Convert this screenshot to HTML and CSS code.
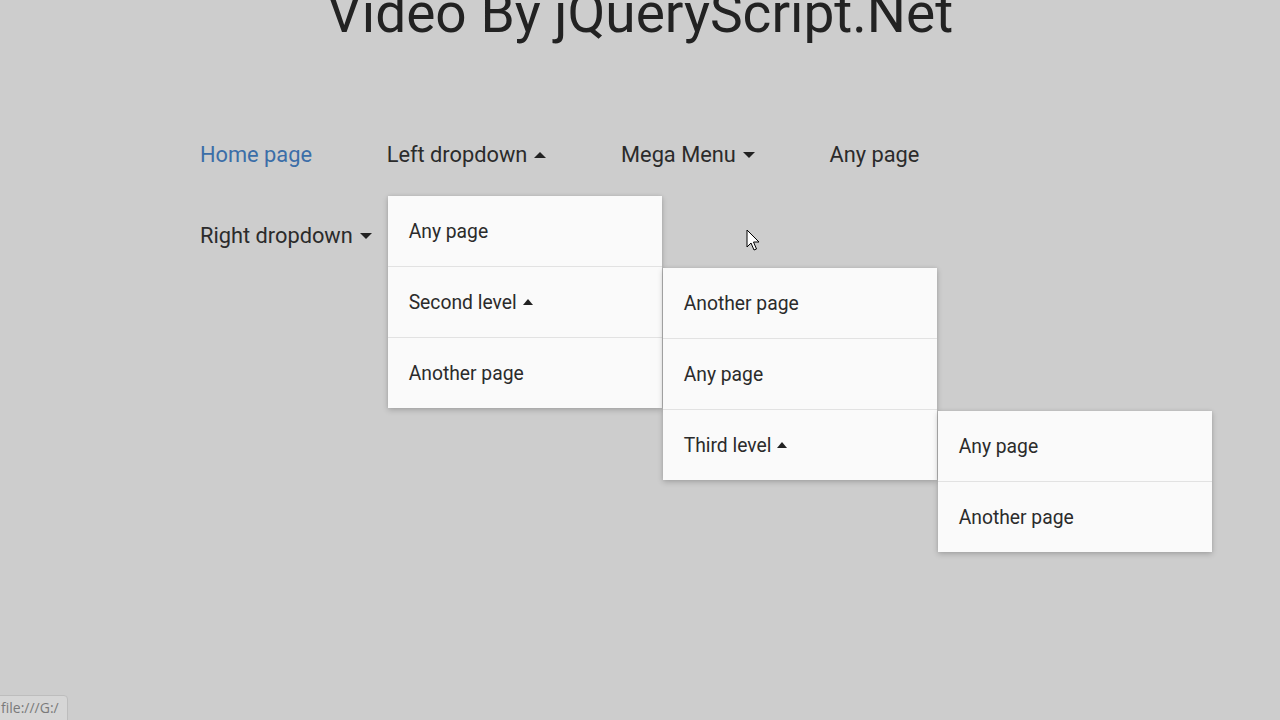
FILE: index.html
```html
<!DOCTYPE html>
<html lang="en">
<head>
<meta charset="utf-8">
<title>Multi-level dropdown</title>
<link rel="stylesheet" href="styles.css">
</head>
<body>
<h1 class="title">Video By jQueryScript.Net</h1>
<nav class="nav">
  <ul class="nav-list">
    <li class="nav-item"><a class="nav-link active" href="#">Home page</a></li>
    <li class="nav-item">
      <a class="nav-link" href="#">Left dropdown<span class="caret up"></span></a>
      <ul class="menu">
        <li class="menu-item"><a href="#">Any page</a></li>
        <li class="menu-item">
          <a href="#">Second level<span class="caret up small"></span></a>
          <ul class="menu sub">
            <li class="menu-item"><a href="#">Another page</a></li>
            <li class="menu-item"><a href="#">Any page</a></li>
            <li class="menu-item">
              <a href="#">Third level<span class="caret up small"></span></a>
              <ul class="menu sub">
                <li class="menu-item"><a href="#">Any page</a></li>
                <li class="menu-item"><a href="#">Another page</a></li>
              </ul>
            </li>
          </ul>
        </li>
        <li class="menu-item"><a href="#">Another page</a></li>
      </ul>
    </li>
    <li class="nav-item"><a class="nav-link" href="#">Mega Menu<span class="caret down"></span></a></li>
    <li class="nav-item"><a class="nav-link" href="#">Any page</a></li>
    <li class="nav-item"><a class="nav-link" href="#">Right dropdown<span class="caret down"></span></a></li>
  </ul>
</nav>
<svg class="cursor" width="14" height="24" viewBox="0 0 14 24"><path d="M1 1 L1 18 L5 14 L8 21 L10.5 20 L7.5 13 L13 13 Z" fill="#fff" stroke="#000" stroke-width="1"/></svg>
<div class="status">file:///G:/</div>
</body>
</html>
```
FILE: styles.css
```css
html, body {
  margin: 0;
  padding: 0;
}
body {
  background: #cdcdcd;
  font-family: Roboto, "Noto Sans", Arial, sans-serif;
  color: #2b2b2b;
  height: 720px;
  overflow: hidden;
  position: relative;
}
.title {
  margin: -14px 0 0;
  font-size: 55px;
  line-height: 55px;
  font-weight: 400;
  text-align: center;
  color: #222;
}
.nav {
  width: 880px;
  margin: 73px auto 0;
}
.nav-list {
  list-style: none;
  margin: 0;
  padding: 0;
  display: flex;
  flex-wrap: wrap;
  column-gap: 74.7px;
}
.nav-item {
  position: relative;
  height: 81px;
  display: flex;
  align-items: center;
}
.nav-link {
  font-size: 21.8px;
  color: #2b2b2b;
  text-decoration: none;
  display: flex;
  align-items: center;
}
.nav-link.active {
  color: #3b6ea8;
}
.caret {
  display: inline-block;
  width: 0;
  height: 0;
  margin-left: 7px;
  border-left: 6px solid transparent;
  border-right: 6px solid transparent;
}
.caret.down {
  border-top: 6px solid #222;
}
.caret.up {
  border-bottom: 6px solid #222;
}
.caret.small {
  border-left-width: 5.5px;
  border-right-width: 5.5px;
  border-bottom-width: 6px;
  margin-left: 6px;
}
.menu {
  list-style: none;
  margin: 0;
  padding: 0;
  position: absolute;
  top: calc(100% + 1px);
  left: 1px;
  width: 274px;
  background: #fafafa;
  box-shadow: 0 2px 6px rgba(0, 0, 0, 0.2), 0 0 3px rgba(0, 0, 0, 0.08);
  z-index: 2;
}
.menu.sub {
  top: 1px;
  left: calc(100% + 1px);
}
.menu-item {
  position: relative;
  height: 70px;
  border-top: 1px solid #e2e2e2;
  display: flex;
  align-items: center;
}
.menu-item:first-child {
  border-top: none;
}
.menu-item > a {
  padding-left: 21px;
  font-size: 19.3px;
  color: #2b2b2b;
  text-decoration: none;
  display: flex;
  align-items: center;
}
.cursor {
  position: absolute;
  left: 746px;
  top: 229px;
}
.status {
  position: absolute;
  left: -1px;
  bottom: -1px;
  padding: 3px 8px 3px 1px;
  font-family: "Open Sans", "DejaVu Sans", sans-serif;
  font-size: 14px;
  line-height: 18px;
  color: #7a7a7a;
  background: #d6d6d6;
  border: 1px solid #bdbdbd;
  border-top-right-radius: 4px;
}
```
